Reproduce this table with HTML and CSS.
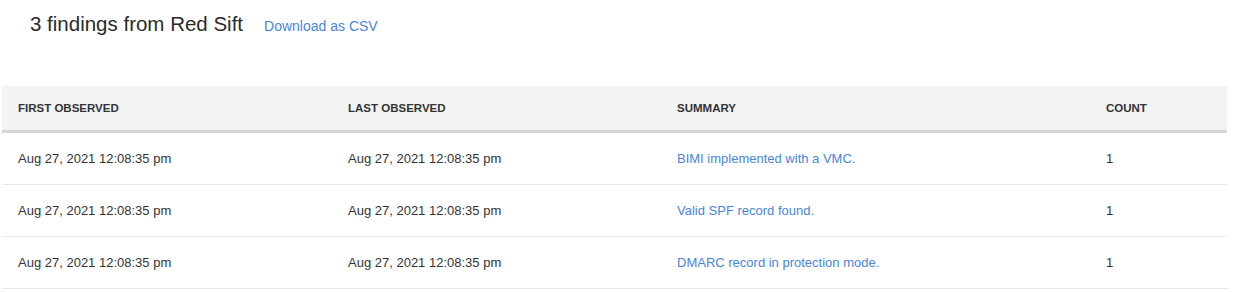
FILE: index.html
```html
<!DOCTYPE html>
<html lang="en">
<head>
<meta charset="utf-8">
<title>Findings</title>
<link rel="stylesheet" href="styles.css">
</head>
<body>
<div class="page">
  <div class="heading">
    <h2 class="title">3 findings from Red Sift</h2>
    <a class="csv" href="#">Download as CSV</a>
  </div>
  <table class="findings">
    <colgroup>
      <col class="c1"><col class="c2"><col class="c3"><col class="c4">
    </colgroup>
    <thead>
      <tr>
        <th>FIRST OBSERVED</th>
        <th>LAST OBSERVED</th>
        <th>SUMMARY</th>
        <th>COUNT</th>
      </tr>
    </thead>
    <tbody>
      <tr>
        <td>Aug 27, 2021 12:08:35 pm</td>
        <td>Aug 27, 2021 12:08:35 pm</td>
        <td><a href="#">BIMI implemented with a VMC.</a></td>
        <td>1</td>
      </tr>
      <tr>
        <td>Aug 27, 2021 12:08:35 pm</td>
        <td>Aug 27, 2021 12:08:35 pm</td>
        <td><a href="#">Valid SPF record found.</a></td>
        <td>1</td>
      </tr>
      <tr>
        <td>Aug 27, 2021 12:08:35 pm</td>
        <td>Aug 27, 2021 12:08:35 pm</td>
        <td><a href="#">DMARC record in protection mode.</a></td>
        <td>1</td>
      </tr>
    </tbody>
  </table>
</div>
</body>
</html>
```
FILE: styles.css
```css
html, body {
  margin: 0;
  padding: 0;
  background: #ffffff;
}
body {
  font-family: "Liberation Sans", Arial, sans-serif;
  color: #333333;
}
.page {
  padding: 12px 0 0 2px;
}
.heading {
  display: flex;
  align-items: baseline;
  gap: 21px;
  padding-left: 28px;
  height: 24px;
  margin-bottom: 50px;
}
.title {
  margin: 0;
  font-size: 20.5px;
  font-weight: 400;
  line-height: 24px;
  color: #2b2b2b;
}
.csv {
  font-size: 14px;
  color: #4a86d6;
  text-decoration: none;
}
.findings {
  width: 1225px;
  border-collapse: collapse;
  table-layout: fixed;
}
.c1 { width: 330px; }
.c2 { width: 329px; }
.c3 { width: 429px; }
.c4 { width: 137px; }
.findings th {
  background: #f2f3f3;
  height: 44px;
  padding: 0 16px;
  text-align: left;
  font-size: 11.5px;
  font-weight: 700;
  color: #333333;
  border-bottom: 3px solid #d6d7d7;
  vertical-align: middle;
}
.findings td {
  height: 51px;
  padding: 0 16px;
  font-size: 13px;
  color: #333333;
  border-bottom: 1px solid #e6e7e7;
  vertical-align: middle;
}
.findings td a {
  color: #4a86d6;
  text-decoration: none;
}
```
